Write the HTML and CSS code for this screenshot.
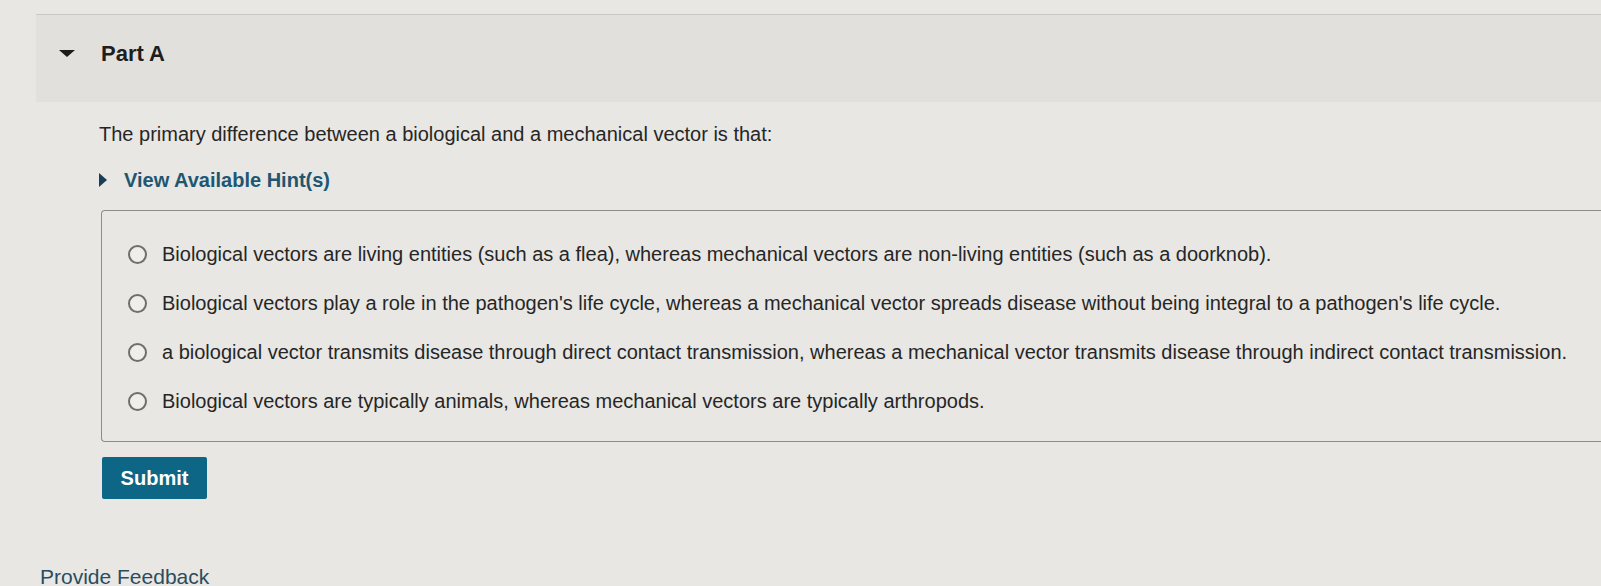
FILE: index.html
```html
<!DOCTYPE html>
<html>
<head>
<meta charset="utf-8">
<link rel="stylesheet" href="styles.css">
</head>
<body>
<div class="page">
  <section class="part">
    <header class="part-head">
      <span class="caret-down"></span>
      <h2 class="part-title">Part A</h2>
    </header>
    <div class="part-body">
      <p class="question">The primary difference between a biological and a mechanical vector is that:</p>
      <div class="hint"><span class="caret-right"></span><span class="hint-text">View Available Hint(s)</span></div>
      <div class="answers">
        <label class="choice"><span class="radio"></span><span class="choice-text">Biological vectors are living entities (such as a flea), whereas mechanical vectors are non-living entities (such as a doorknob).</span></label>
        <label class="choice"><span class="radio"></span><span class="choice-text">Biological vectors play a role in the pathogen's life cycle, whereas a mechanical vector spreads disease without being integral to a pathogen's life cycle.</span></label>
        <label class="choice"><span class="radio"></span><span class="choice-text">a biological vector transmits disease through direct contact transmission, whereas a mechanical vector transmits disease through indirect contact transmission.</span></label>
        <label class="choice"><span class="radio"></span><span class="choice-text">Biological vectors are typically animals, whereas mechanical vectors are typically arthropods.</span></label>
      </div>
      <button class="submit">Submit</button>
    </div>
  </section>
  <a class="feedback">Provide Feedback</a>
</div>
</body>
</html>
```

FILE: styles.css
```css
html, body {
  margin: 0;
  padding: 0;
  background: #e8e7e4;
  font-family: "Liberation Sans", Arial, sans-serif;
  color: #262626;
  overflow: hidden;
}
.page {
  width: 1601px;
  height: 586px;
  display: flex;
  flex-direction: column;
}
.part {
  margin-left: 36px;
  margin-top: 14px;
}
.part-head {
  height: 88px;
  background: #e1e0dd;
  border-top: 1px solid #c9c8c5;
  display: flex;
  align-items: center;
  padding-left: 23px;
  box-sizing: border-box;
  padding-bottom: 10px;
}
.caret-down {
  width: 0;
  height: 0;
  border-left: 8px solid transparent;
  border-right: 8px solid transparent;
  border-top: 7px solid #1c1c1c;
  margin-right: 26px;
}
.part-title {
  margin: 0;
  font-size: 22px;
  line-height: 24px;
  font-weight: bold;
  color: #1e1e1e;
}
.part-body {
  padding-left: 63px;
}
.question {
  margin: 20px 0 0 0;
  font-size: 20px;
  line-height: 24px;
  color: #262626;
}
.hint {
  margin-top: 22px;
  display: flex;
  align-items: center;
  height: 24px;
}
.caret-right {
  width: 0;
  height: 0;
  border-top: 7.5px solid transparent;
  border-bottom: 7.5px solid transparent;
  border-left: 8px solid #173f55;
  margin-right: 17px;
}
.hint-text {
  font-size: 20px;
  font-weight: bold;
  color: #1f5670;
}
.answers {
  margin-top: 18px;
  margin-left: 2px;
  border: 1px solid #8d8c8a;
  border-right: none;
  border-radius: 4px 0 0 4px;
  height: 232px;
  box-sizing: border-box;
  padding-top: 31px;
  display: flex;
  flex-direction: column;
  gap: 25px;
}
.choice {
  display: flex;
  align-items: center;
  height: 24px;
  padding-left: 26px;
}
.radio {
  width: 15px;
  height: 15px;
  border: 2px solid #6e6e6e;
  border-radius: 50%;
  margin-right: 15px;
  flex: none;
  background: #efeeeb;
}
.choice-text {
  font-size: 20px;
  color: #262626;
  white-space: nowrap;
}
.submit {
  margin-top: 15px;
  margin-left: 3px;
  width: 105px;
  height: 42px;
  background: #0e6687;
  color: #fff;
  border: none;
  border-radius: 2px;
  font-family: "Liberation Sans", Arial, sans-serif;
  font-size: 20px;
  font-weight: bold;
  padding: 0;
}
.feedback {
  margin-top: 66px;
  margin-left: 40px;
  font-size: 21px;
  line-height: 24px;
  color: #2a4d5e;
}
```
